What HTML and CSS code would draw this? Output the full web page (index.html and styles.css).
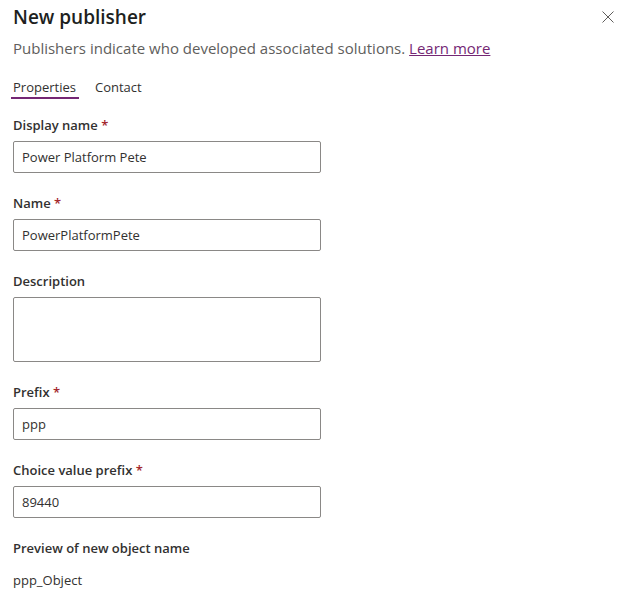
FILE: index.html
```html
<!DOCTYPE html>
<html lang="en">
<head>
  <meta charset="UTF-8" />
  <title>New publisher</title>
  <link rel="stylesheet" href="styles.css">
</head>
<body>
  <div class="panel">
    <div class="panel-header">
      <h1 class="panel-title">New publisher</h1>
      <button class="close-btn" aria-label="Close">
        <svg width="12" height="12" viewBox="0 0 12 12">
          <path d="M0.5 0.5 L11.5 11.5 M11.5 0.5 L0.5 11.5" stroke="#605e5c" stroke-width="1" fill="none" />
        </svg>
      </button>
    </div>
    <p class="panel-desc">Publishers indicate who developed associated solutions. <a href="#">Learn more</a></p>

    <div class="tabs">
      <div class="tab active">Properties</div>
      <div class="tab">Contact</div>
    </div>

    <div class="field">
      <label class="field-label">Display name <span class="req">*</span></label>
      <input class="text-input" type="text" value="Power Platform Pete" />
    </div>

    <div class="field">
      <label class="field-label">Name <span class="req">*</span></label>
      <input class="text-input" type="text" value="PowerPlatformPete" />
    </div>

    <div class="field">
      <label class="field-label">Description</label>
      <textarea class="text-input text-area"></textarea>
    </div>

    <div class="field">
      <label class="field-label">Prefix <span class="req">*</span></label>
      <input class="text-input" type="text" value="ppp" />
    </div>

    <div class="field">
      <label class="field-label">Choice value prefix <span class="req">*</span></label>
      <input class="text-input" type="text" value="89440" />
    </div>

    <div class="field">
      <label class="field-label">Preview of new object name</label>
      <div class="preview">ppp_Object</div>
    </div>
  </div>
</body>
</html>
```
FILE: styles.css
```css
body {
  margin: 0;
  background: #fff;
  font-family: "Open Sans", "Segoe UI", sans-serif;
  color: #323130;
}
.panel {
  padding: 4px 13px 0 13px;
  width: 601px;
}
.panel-header {
  display: flex;
  justify-content: space-between;
  align-items: center;
}
.panel-title {
  margin: 0;
  font-size: 19px;
  font-weight: 600;
  line-height: 26px;
  color: #201f1e;
}
.close-btn {
  border: none;
  background: none;
  padding: 0;
  width: 12px;
  height: 12px;
  display: flex;
}
.panel-desc {
  margin: 6px 0 0 0;
  font-size: 15px;
  line-height: 24px;
  color: #605e5c;
}
.panel-desc a {
  color: #742774;
}
.tabs {
  display: flex;
  margin-top: 17px;
  margin-left: -2px;
}
.tab {
  font-size: 13px;
  line-height: 20px;
  padding: 0 8px 0 2px;
  margin-right: 7px;
  border-bottom: 2px solid transparent;
  color: #323130;
}
.tab.active {
  border-bottom-color: #742774;
  padding-right: 3px;
  margin-right: 14px;
}
.field {
  display: flex;
  flex-direction: column;
  margin-top: 16px;
}
.field + .field {
  margin-top: 20px;
}
.field-label {
  font-size: 13px;
  font-weight: 600;
  line-height: 20px;
  padding-bottom: 6px;
  color: #323130;
}
.req {
  color: #a4262c;
}
.text-input {
  box-sizing: border-box;
  width: 308px;
  height: 32px;
  border: 1px solid #8a8886;
  border-radius: 2px;
  padding: 0 8px;
  font-family: inherit;
  font-size: 13px;
  color: #323130;
  outline: none;
  background: #fff;
}
.text-area {
  height: 65px;
  resize: none;
  margin: 0;
}
.preview {
  font-size: 13px;
  line-height: 20px;
  padding-top: 6px;
  color: #323130;
}
```
